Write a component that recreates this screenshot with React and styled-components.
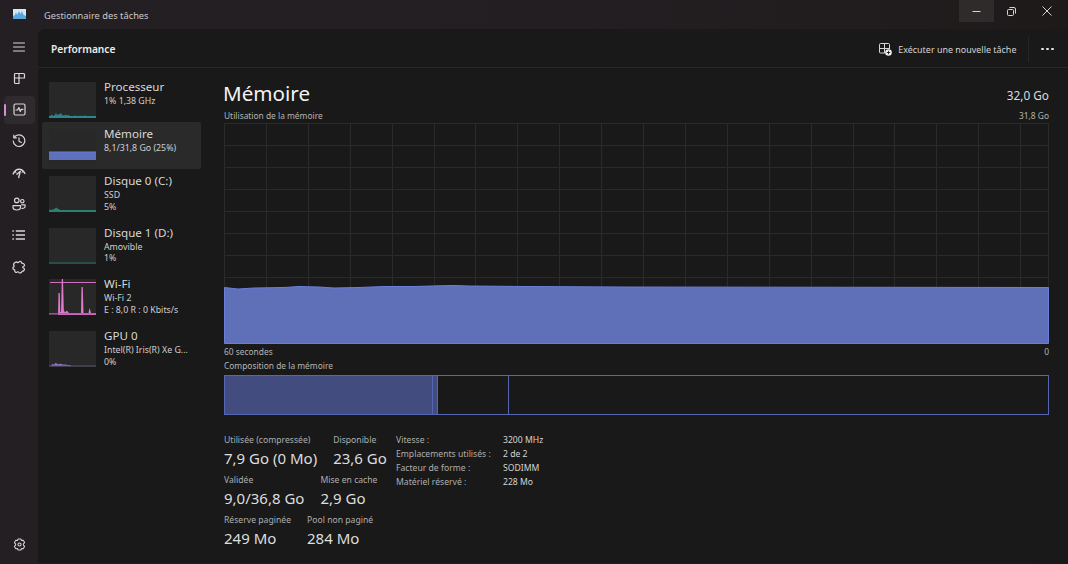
import React from 'react';
import styled, { createGlobalStyle } from 'styled-components';

const GlobalStyle = createGlobalStyle`
  html, body { margin: 0; padding: 0; background: #231e22; }
  body { width: 1068px; height: 564px; overflow: hidden; font-family: "Noto Sans", "Open Sans", sans-serif; }
  * { box-sizing: border-box; }
`;

const Window = styled.div`
  width: 1068px;
  height: 564px;
  display: grid;
  grid-template-columns: 38px 1fr;
  grid-template-rows: 29px 1fr;
  background: linear-gradient(90deg, #241f23 0%, #231e21 55%, #1f1a1a 100%);
  color: #fff;
`;

const TitleBar = styled.header`
  grid-column: 1 / 3;
  display: flex;
  align-items: center;
`;

const AppIconSlot = styled.div`
  width: 38px;
  display: flex;
  justify-content: center;
  padding-bottom: 2px;
`;

const AppTitle = styled.span`
  margin-left: 6px;
  font-size: 9.3px;
  color: #c9c7c8;
  padding-top: 2px;
`;

const WinButtons = styled.div`
  margin-left: auto;
  display: flex;
  align-self: flex-start;
  margin-right: 3px;
`;

const WinButton = styled.div`
  width: 35.500px;
  height: 22px;
  display: flex;
  align-items: center;
  justify-content: center;
  background: ${(p) => (p.$active ? '#302b2b' : 'transparent')};
  color: #d4d4d4;
`;

const Rail = styled.nav`
  display: flex;
  flex-direction: column;
  align-items: center;
  padding: 4px 0 2px 0;
`;

const RailButton = styled.div`
  position: relative;
  width: 31px;
  height: 28px;
  margin-bottom: 3.400px;
  border-radius: 4px;
  display: flex;
  align-items: center;
  justify-content: center;
  color: #d8d6d7;
  background: ${(p) => (p.$active ? '#2f2a2e' : 'transparent')};

  ${(p) =>
    p.$active &&
    `&::before {
      content: '';
      position: absolute;
      left: 0;
      top: 8px;
      width: 2px;
      height: 12px;
      border-radius: 2px;
      background: #d58fd6;
    }`}
`;

const RailSpacer = styled.div`
  flex: 1;
`;

const Main = styled.main`
  background: #191919;
  border-top-left-radius: 7px;
  display: flex;
  flex-direction: column;
  min-height: 0;
  margin-bottom: 1px;
`;

const Toolbar = styled.div`
  height: 39px;
  flex: none;
  display: flex;
  align-items: center;
  padding: 2px 13px 0 13px;
  border-bottom: 1px solid #272727;
`;

const PageTitle = styled.h1`
  margin: 0;
  font-size: 10.200px;
  font-weight: 600;
  color: #ececec;
`;

const RunTask = styled.div`
  margin-left: auto;
  display: flex;
  align-items: center;
  gap: 6px;
  font-size: 8.950px;
  color: #d4d4d4;
`;

const ToolDivider = styled.div`
  width: 1px;
  height: 25px;
  background: #262626;
  margin: 0 12px 0 12px;
`;

const MoreDots = styled.div`
  display: flex;
  gap: 2.400px;
  margin-right: 1px;

  span {
    width: 2.600px;
    height: 2.600px;
    border-radius: 50%;
    background: #e4e4e4;
  }
`;

const Body = styled.div`
  flex: 1;
  display: flex;
  min-height: 0;
`;

const SideList = styled.aside`
  width: 186px;
  flex: none;
  padding: 7px 0 0 4px;
  display: flex;
  flex-direction: column;
`;

const DeviceRow = styled.div`
  width: 159px;
  height: ${(p) => p.$h}px;
  padding: 7px 0 0 7px;
  display: flex;
  gap: 8px;
  border-radius: 2px;
  background: ${(p) => (p.$active ? '#2a2a2a' : 'transparent')};
`;

const Thumb = styled.div`
  width: 47px;
  height: 36px;
  background: #282828;
  flex: none;
  overflow: hidden;

  svg {
    display: block;
  }
`;

const DeviceText = styled.div`
  display: flex;
  flex-direction: column;
  margin-top: -2px;
`;

const DeviceName = styled.div`
  font-size: 11.600px;
  line-height: 13px;
  color: #d8d8d8;
  margin-bottom: 3px;
`;

const DeviceSub = styled.div`
  font-size: 8.800px;
  line-height: 11.600px;
  color: #cfcfcf;
  white-space: nowrap;
`;

const Content = styled.section`
  flex: 1;
  padding: 12px 19px 0 0;
  display: flex;
  flex-direction: column;
`;

const HeadRow = styled.div`
  display: flex;
  justify-content: space-between;
  align-items: flex-end;
  height: 26px;
`;

const BigTitle = styled.h2`
  margin: 0 0 0 -1px;
  font-weight: 400;
  font-size: 20.600px;
  line-height: 26px;
  color: #f2f2f2;
`;

const Capacity = styled.div`
  font-size: 11.800px;
  color: #dcdcdc;
  padding-bottom: 3px;
`;

const CaptionRow = styled.div`
  display: flex;
  justify-content: space-between;
  font-size: 8.400px;
  line-height: 11px;
  height: ${(p) => p.$h || 11}px;
  color: #b4b4b4;
  margin-top: ${(p) => p.$mt || 0}px;
`;

const Graph = styled.div`
  height: 221px;
  margin-top: 2px;

  svg {
    width: 100%;
    height: 100%;
    display: block;
  }
`;

const Composition = styled.div`
  height: 40px;
  display: flex;
  border: 1px solid #5666b4;
  margin-top: 4px;
`;

const CompSegment = styled.div`
  width: ${(p) => p.$w}px;
  flex: ${(p) => (p.$grow ? 1 : 'none')};
  background: ${(p) => p.$bg || 'transparent'};
  border-right: ${(p) => (p.$edge ? '1px solid #5666b4' : 'none')};
`;

const StatsArea = styled.div`
  display: flex;
  margin-top: 19px;
`;

const StatColumn = styled.div`
  width: 172px;
  display: flex;
  flex-direction: column;
  gap: 5px;
`;

const StatRow = styled.div`
  display: flex;
  gap: 16px;
`;

const Stat = styled.div`
  display: flex;
  flex-direction: column;
`;

const StatLabel = styled.div`
  font-size: 8.650px;
  line-height: 13px;
  color: #aeaeae;
  white-space: nowrap;
`;

const StatValue = styled.div`
  font-size: 15px;
  line-height: 22px;
  color: #dedede;
  white-space: nowrap;
`;

const Specs = styled.dl`
  margin: 0;
  display: grid;
  grid-template-columns: 107px auto;
  grid-auto-rows: 14px;
  font-size: 8.650px;
  line-height: 13px;

  dt { color: #aeaeae; white-space: nowrap; }
  dd { margin: 0; color: #d4d4d4; white-space: nowrap; }
`;

const AppIcon = () => (
  <svg width="13" height="10" viewBox="0 0 13 10">
    <rect width="13" height="10" fill="#d5e6f4" />
    <path d="M0 10V7l2-1 1-3 1 3 2-4 1.500 3L9 2l1 3 1 1 2 1v3z" fill="#5aa6dc" />
  </svg>
);

const Glyph = ({ size = 14, box = 14, children, ...rest }) => (
  <svg width={size} height={size} viewBox={`0 0 ${box} ${box}`} fill="none" stroke="currentColor" strokeWidth="1.200" strokeLinecap="round" strokeLinejoin="round" {...rest}>
    {children}
  </svg>
);

const MenuIcon = () => (
  <Glyph size={14}>
    <path d="M1.500 3H12.500M1.500 7H12.500M1.500 11H12.500" strokeWidth="1.100" />
  </Glyph>
);

const ProcessesIcon = () => (
  <Glyph size={13} box={13}>
    <path d="M6 1.500H2.500a1 1 0 0 0-1 1V6H6z" />
    <path d="M6 1.500h4.500a1 1 0 0 1 1 1V6H6" />
    <path d="M1.500 6v4.500a1 1 0 0 0 1 1H6V6" />
  </Glyph>
);

const PerformanceIcon = () => (
  <Glyph size={13} box={13}>
    <rect x="1" y="1" width="11" height="11" rx="1.500" />
    <path d="M3 7H4.700L5.800 4.500L7.300 8.500L8.300 6.300H10" />
  </Glyph>
);

const HistoryIcon = () => (
  <Glyph size={14}>
    <path d="M2.200 3.400A5.800 5.800 0 1 1 1.200 7" />
    <path d="M1.800 1.200V3.800H4.400" />
    <path d="M7 3.800V7.300L9.300 8.500" />
  </Glyph>
);

const StartupIcon = () => (
  <Glyph size={14}>
    <path d="M1.200 7.800C2.700 4.700 4.700 3.300 7 3.300S11.300 4.700 12.800 7.300" strokeWidth="1.500" />
    <path d="M6.700 11.500L8.300 5.300L5 8.300" strokeWidth="1.300" />
    <path d="M3.300 5.300L4 6.900M10.700 5.300L10.100 6.500" strokeWidth="1" />
  </Glyph>
);

const UsersIcon = () => (
  <Glyph size={14}>
    <circle cx="4.800" cy="3.400" r="2.300" />
    <circle cx="10.300" cy="4.200" r="1.700" />
    <path d="M1 8.700h7.500v1.600c0 1.700-1.700 2.700-3.700 2.700S1 12 1 10.300z" />
    <path d="M9.600 7.800h3.500v1.500c0 1.300-1.200 2.200-3.200 2.100" />
  </Glyph>
);

const ListIcon = () => (
  <Glyph size={14}>
    <path d="M.9 3H1.300M.9 7H1.300M.9 11H1.300" strokeWidth="1.500" />
    <path d="M3.800 3H13M3.800 7H13M3.800 11H13" strokeWidth="1.300" strokeLinecap="butt" />
  </Glyph>
);

const ServicesIcon = () => (
  <Glyph size={14}>
    <path d="M4.800 1.800C5.300 3 6.800 3 7.400 1.500 8.500 1 9.800 2 10 3.400c1.400-.2 2.700.8 2.600 2.200-.8.800-1.900.9-1.900 1.600s1.200.7 1.700 1.500c.3 1.400-.8 2.600-2.300 2.500-.4 1.300-1.700 2-2.900 1.500-.5-1.200-1.800-1.300-2.500-.2-1.300 0-2.200-1.100-1.900-2.400C1.200 9.500.6 8.400 1.100 7.200 2.300 7 2.500 5.700 1.500 5 1.600 3.300 3.200 2 4.800 1.800z" />
  </Glyph>
);

const SettingsIcon = () => (
  <Glyph size={13} box={14} strokeWidth="1.100">
    <path d="M5.500 1h3l.6 1.800 1.900-.4 1.500 2.500L11.200 6.300v1.400l1.300 1.400L11 11.600l-1.900-.4L8.500 13h-3l-.6-1.800-1.900.4L1.500 9.100l1.300-1.400V6.300L1.500 4.900 3 2.400l1.900.4z" />
    <circle cx="7" cy="7" r="1.700" />
  </Glyph>
);

const MinimizeIcon = () => (
  <svg width="9" height="9" viewBox="0 0 9 9" stroke="currentColor" strokeWidth="1">
    <path d="M.5 4.500H8.500" />
  </svg>
);

const CloseIcon = () => (
  <svg width="10" height="10" viewBox="0 0 10 10" stroke="currentColor" strokeWidth="1">
    <path d="M.5 .5L9.500 9.500M9.500 .5L.5 9.500" />
  </svg>
);

const RestoreIcon = () => (
  <svg width="9" height="9" viewBox="0 0 9 9" fill="none" stroke="currentColor" strokeWidth="1">
    <rect x="0.500" y="2.500" width="6" height="6" rx="1" />
    <path d="M2.500 .5h4.500a1.500 1.500 0 0 1 1.500 1.500v4.500" />
  </svg>
);

const NewTaskIcon = () => (
  <svg width="13" height="13" viewBox="0 0 13 13">
    <path d="M.5 1.500a1 1 0 0 1 1-1h8a1 1 0 0 1 1 1V6M5.500 .5v9.500M.5 5.500h10M.5 1.500V9a1 1 0 0 0 1 1h5" fill="none" stroke="#d4d4d4" />
    <circle cx="9.500" cy="9.500" r="3.300" fill="#f0f0f0" />
    <path d="M9.500 7.800v3.400M7.800 9.500h3.400" stroke="#191919" strokeWidth="0.900" />
  </svg>
);

const Baseline = ({ color }) => <rect x="0" y="34.500" width="47" height="1" fill={color} />;

const CpuThumb = () => (
  <svg width="47" height="36" viewBox="0 0 47 36">
    <path d="M0 36V34L2 33.500L3 32.500L4 34L6 33L7 30.500L8 33L9 32.500L11 32L12 30.800L13 33L15 33.500L17 32.500L18 33.500L20 33L21 34L25 34L26 33.300L27 34L32 33.800L33 34L36 33.500L37 34L47 34V36Z" fill="#2f9aa6" fillOpacity="0.75" />
    <Baseline color="#2d8f9b" />
  </svg>
);

const MemThumb = () => (
  <svg width="47" height="31" viewBox="0 0 47 31">
    <path d="M0 23H47V31H0Z" fill="#5f70bd" />
    <path d="M0 23H47" stroke="#6a7dd4" />
  </svg>
);

const DiskThumb = () => (
  <svg width="47" height="36" viewBox="0 0 47 36">
    <path d="M0 36V34L4 33.500L6 32.500L7 31.500L8 32L9 33L10 33L11 34H47V36Z" fill="#2f9a8c" fillOpacity="0.75" />
    <Baseline color="#2b8377" />
  </svg>
);

const IdleDiskThumb = () => (
  <svg width="47" height="36" viewBox="0 0 47 36">
    <Baseline color="#2b7268" />
  </svg>
);

const WifiThumb = () => (
  <svg width="47" height="36" viewBox="0 0 47 36">
    <rect x="1" y="3" width="46" height="1" fill="#d070c0" />
    <path d="M9 36L9.500 14L10.800 14L11.300 33L12 33L12.800 0H14L14.800 31L16 33.500L18 31.500L19 33L20 34H32L32.500 8H33.800L34.500 34H39.500L40.500 29L42 34H47V36Z" fill="#e078cc" />
    <rect x="0" y="34.200" width="47" height="1.300" fill="#b25aa6" />
  </svg>
);

const GpuThumb = () => (
  <svg width="47" height="36" viewBox="0 0 47 36">
    <path d="M2 35L3 33L5 33.500L7 31.500L8 33L10 33L12 32.700L14 33.500L17 33.500L19 34L22 34L22 35Z" fill="#a07cd8" fillOpacity="0.85" />
    <rect x="0" y="34.500" width="47" height="1" fill="#5e5070" />
  </svg>
);

const devices = [
  { name: 'Processeur', sub: ['1%  1,38 GHz'], thumb: <CpuThumb />, h: 47 },
  { name: 'Mémoire', sub: ['8,1/31,8 Go (25%)'], thumb: <MemThumb />, h: 47, active: true },
  { name: 'Disque 0 (C:)', sub: ['SSD', '5%'], thumb: <DiskThumb />, h: 51.500 },
  { name: 'Disque 1 (D:)', sub: ['Amovible', '1%'], thumb: <IdleDiskThumb />, h: 51.500 },
  { name: 'Wi-Fi', sub: ['Wi-Fi 2', 'E : 8,0 R : 0 Kbits/s'], thumb: <WifiThumb />, h: 52 },
  { name: 'GPU 0', sub: ['Intel(R) Iris(R) Xe G...', '0%'], thumb: <GpuThumb />, h: 52 },
];

const specs = [
  ['Vitesse :', '3200 MHz'],
  ['Emplacements utilisés :', '2 de 2'],
  ['Facteur de forme :', 'SODIMM'],
  ['Matériel réservé :', '228 Mo'],
];

const gridX = Array.from({ length: 20 }, (_, i) => Math.round(i * 41.9) + 0.5);
const gridY = Array.from({ length: 10 }, (_, i) => i * 22 + 0.5);
const usage =
  'M0.500 164.500L14 166L30 165L60 164.500L75 163.500L95 164L110 165L135 164.500L160 163.500L190 163.500L215 162.800L230 162.500L245 163L300 163.500L400 164L824.500 164.500V220.500H0.500Z';

const stats = [
  [['Utilisée (compressée)', '7,9 Go (0 Mo)'], ['Disponible', '23,6 Go']],
  [['Validée', '9,0/36,8 Go'], ['Mise en cache', '2,9 Go']],
  [['Réserve paginée', '249 Mo'], ['Pool non paginé', '284 Mo']],
];

export default function App() {
  return (
    <Window>
      <GlobalStyle />
      <TitleBar>
        <AppIconSlot><AppIcon /></AppIconSlot>
        <AppTitle>Gestionnaire des tâches</AppTitle>
        <WinButtons>
          <WinButton $active><MinimizeIcon /></WinButton>
          <WinButton><RestoreIcon /></WinButton>
          <WinButton><CloseIcon /></WinButton>
        </WinButtons>
      </TitleBar>
      <Rail>
        <RailButton><MenuIcon /></RailButton>
        <RailButton><ProcessesIcon /></RailButton>
        <RailButton $active><PerformanceIcon /></RailButton>
        <RailButton><HistoryIcon /></RailButton>
        <RailButton><StartupIcon /></RailButton>
        <RailButton><UsersIcon /></RailButton>
        <RailButton><ListIcon /></RailButton>
        <RailButton><ServicesIcon /></RailButton>
        <RailSpacer />
        <RailButton><SettingsIcon /></RailButton>
      </Rail>
      <Main>
        <Toolbar>
          <PageTitle>Performance</PageTitle>
          <RunTask><NewTaskIcon />Exécuter une nouvelle tâche</RunTask>
          <ToolDivider />
          <MoreDots><span /><span /><span /></MoreDots>
        </Toolbar>
        <Body>
          <SideList>
            {devices.map((d) => (
              <DeviceRow key={d.name} $h={d.h} $active={d.active}>
                <Thumb>{d.thumb}</Thumb>
                <DeviceText>
                  <DeviceName>{d.name}</DeviceName>
                  {d.sub.map((s) => <DeviceSub key={s}>{s}</DeviceSub>)}
                </DeviceText>
              </DeviceRow>
            ))}
          </SideList>
          <Content>
            <HeadRow>
              <BigTitle>Mémoire</BigTitle>
              <Capacity>32,0 Go</Capacity>
            </HeadRow>
            <CaptionRow $mt={4}><span>Utilisation de la mémoire</span><span>31,8 Go</span></CaptionRow>
            <Graph>
              <svg viewBox="0 0 825 221" shapeRendering="crispEdges">
                {gridX.map((x) => <path key={x} d={`M${x} 0V221`} stroke="#2a2a2a" />)}
                {gridY.map((y) => <path key={y} d={`M0 ${y}H825`} stroke="#2a2a2a" />)}
                <path d="M824.500 0V221M0 220.500H825" stroke="#2a2a2a" />
                <path d={usage} fill="#5f70b8" stroke="#6a7fd8" strokeWidth="1" shapeRendering="geometricPrecision" />
              </svg>
            </Graph>
            <CaptionRow $mt={2} $h={14}><span>60 secondes</span><span>0</span></CaptionRow>
            <CaptionRow>Composition de la mémoire</CaptionRow>
            <Composition>
              <CompSegment $w={208} $bg="#434c7e" $edge />
              <CompSegment $w={5} $bg="#434c7e" $edge />
              <CompSegment $w={71} $edge />
              <CompSegment $grow />
            </Composition>
            <StatsArea>
              <StatColumn>
                {stats.map((row) => (
                  <StatRow key={row[0][0]}>
                    {row.map(([label, value]) => (
                      <Stat key={label}>
                        <StatLabel>{label}</StatLabel>
                        <StatValue>{value}</StatValue>
                      </Stat>
                    ))}
                  </StatRow>
                ))}
              </StatColumn>
              <Specs>
                {specs.map(([k, v]) => (
                  <React.Fragment key={k}>
                    <dt>{k}</dt>
                    <dd>{v}</dd>
                  </React.Fragment>
                ))}
              </Specs>
            </StatsArea>
          </Content>
        </Body>
      </Main>
    </Window>
  );
}
